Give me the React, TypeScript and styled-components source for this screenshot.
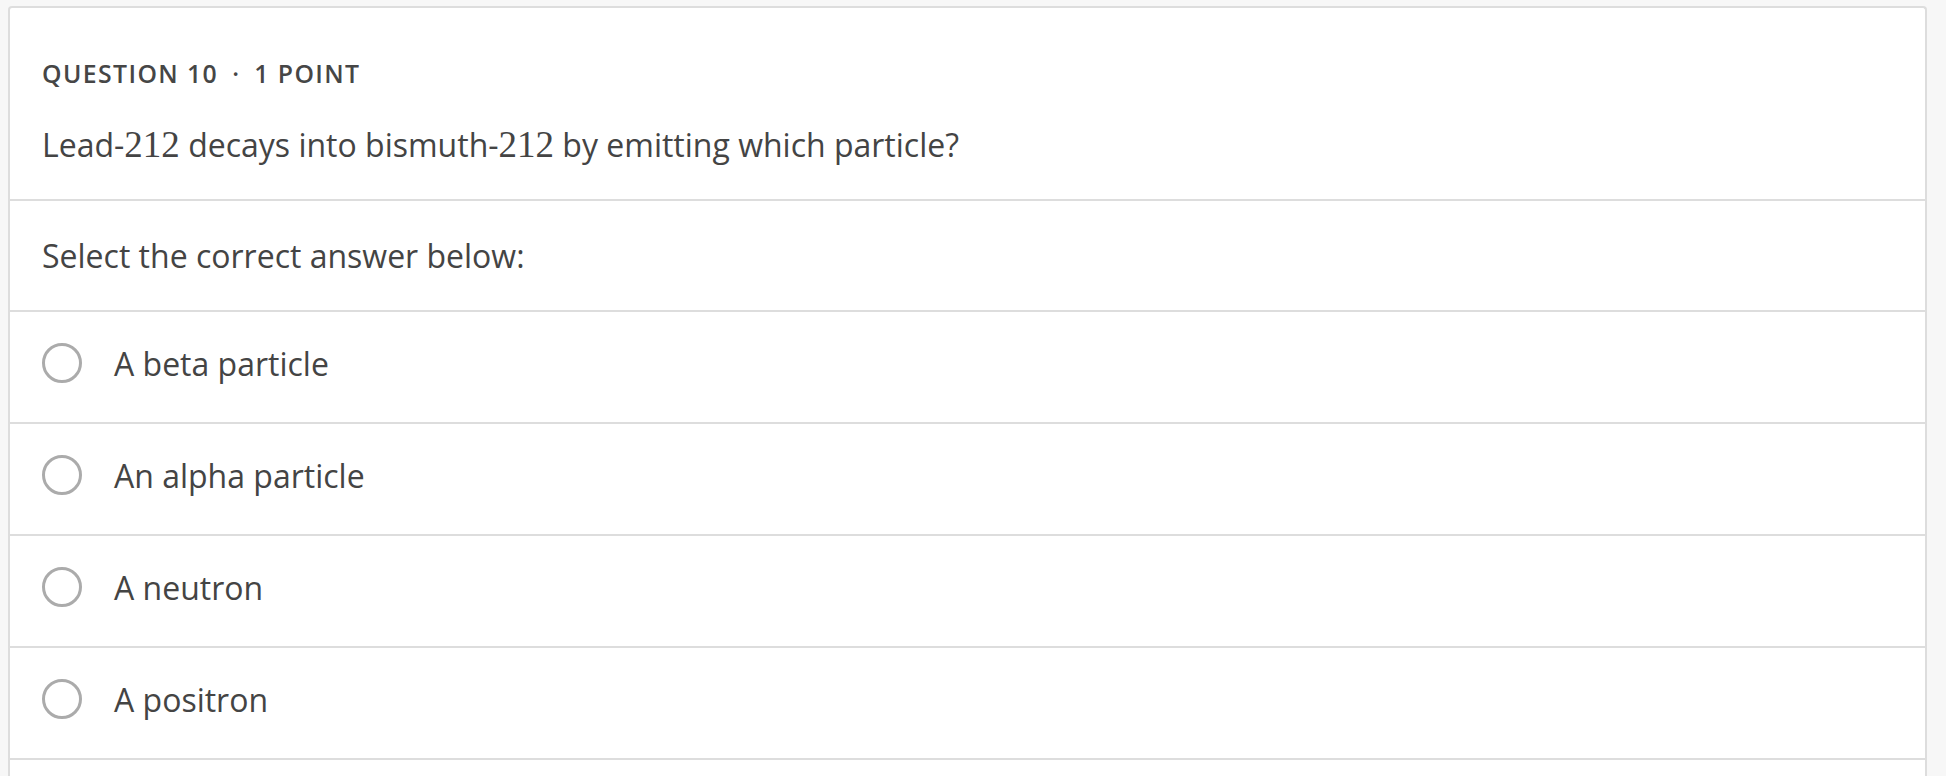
import React from 'react';
import styled, { createGlobalStyle } from 'styled-components';

const GlobalStyle = createGlobalStyle`
  html, body {
    margin: 0;
    padding: 0;
    background: #f7f7f7;
  }
  body {
    font-family: 'Open Sans', 'Noto Sans', sans-serif;
    color: #444;
  }
`;

const answers = ['A beta particle', 'An alpha particle', 'A neutron', 'A positron'];

const mathFont = { fontFamily: "'Liberation Serif', 'Times New Roman', serif", fontSize: 37 };

const Page = styled.div`
  padding: 6px 0 0 8px;
`;

const Card = styled.section`
  width: 1919px;
  box-sizing: border-box;
  background: #fff;
  border: 2px solid #dddddd;
  border-bottom: none;
  border-radius: 4px 4px 0 0;
`;

const Header = styled.header`
  padding: 48px 32px 32px;
`;

const Label = styled.div`
  font-size: 24.8px;
  font-weight: 600;
  letter-spacing: 1.4px;
  color: #464646;
  text-transform: uppercase;
`;

const Dot = styled.span`
  margin: 0 14px;
`;

const Prompt = styled.div`
  margin-top: 33px;
  height: 44px;
  font-size: 32px;
`;

// numbers in the prompt are typeset like math (serif, a bit larger)
const MathNum = styled.span`
  font-family: 'Liberation Serif', 'Times New Roman', serif;
  font-size: 37px;
  line-height: 1;
`;

const Instruction = styled.div`
  display: flex;
  align-items: center;
  height: 111px;
  padding: 0 32px;
  box-sizing: border-box;
  border-top: 2px solid #dddddd;
  font-size: 32px;
`;

const Option = styled.label`
  display: flex;
  align-items: center;
  gap: 32px;
  height: 112px;
  padding: 0 32px 8px;
  box-sizing: border-box;
  border-top: 2px solid #dddddd;
  font-size: 32px;
  cursor: pointer;
`;

const Radio = styled.span`
  width: 40px;
  height: 40px;
  box-sizing: border-box;
  border: 3px solid #ababab;
  border-radius: 50%;
  flex-shrink: 0;
`;

const Footer = styled.div`
  height: 20px;
  border-top: 2px solid #dddddd;
`;

export default function App() {
  return (
    <>
      <GlobalStyle />
      <Page>
        <Card>
          <Header>
            <Label>
              Question 10<Dot>·</Dot>1 point
            </Label>
            <Prompt>
              Lead-<MathNum style={mathFont}>212</MathNum> decays into bismuth-
              <MathNum style={mathFont}>212</MathNum> by emitting which particle?
            </Prompt>
          </Header>
          <Instruction>Select the correct answer below:</Instruction>
          {answers.map((a) => (
            <Option key={a}>
              <Radio />
              {a}
            </Option>
          ))}
          <Footer />
        </Card>
      </Page>
    </>
  );
}
